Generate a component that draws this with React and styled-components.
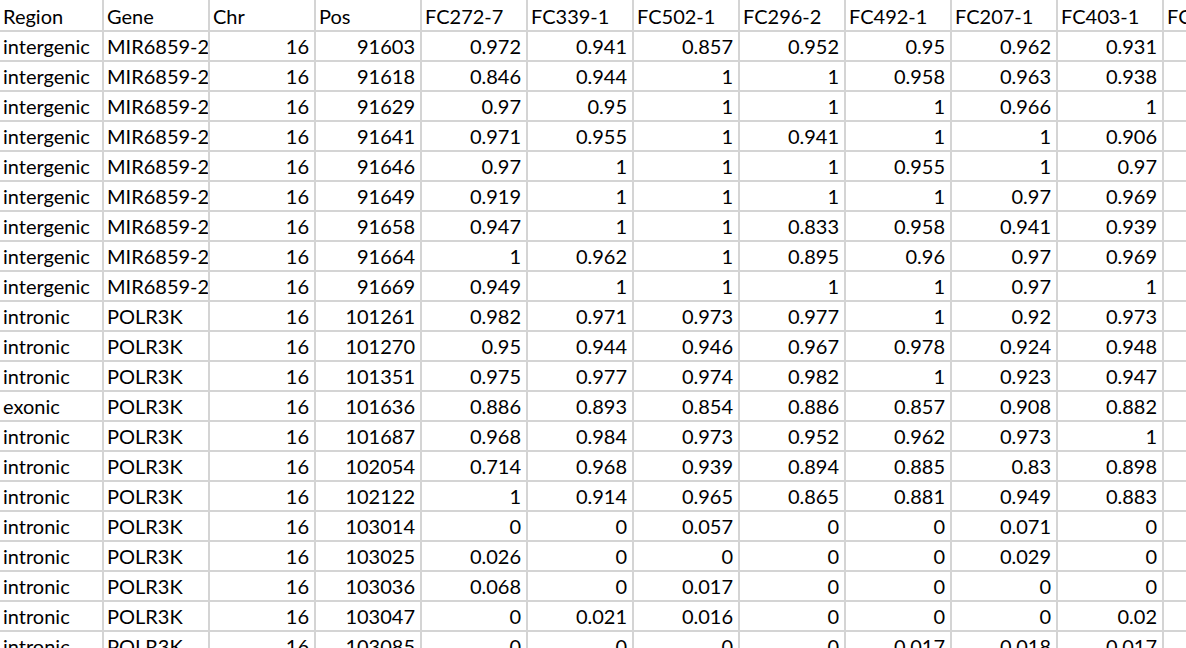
import styled, { createGlobalStyle } from "styled-components";

const GlobalStyle = createGlobalStyle`
	html, body {
		margin: 0;
		padding: 0;
		background: #ffffff;
	}
	body {
		overflow: hidden;
	}
`;

const COLS = [104, 106, 106, 106, 106, 106, 106, 106, 106, 106, 106, 106];

const Sheet = styled.div`
	display: grid;
	grid-template-columns: ${COLS.map((w) => w + "px").join(" ")};
	grid-auto-rows: 30px;
	grid-template-rows: 32px;
	width: 1186px;
	height: 648px;
	overflow: hidden;
	font-family: Lato, "Liberation Sans", sans-serif;
	font-size: 20px;
	color: #000;
`;

const Cell = styled.div`
	box-sizing: border-box;
	border-right: 2px solid #d4d4d4;
	border-bottom: 2px solid #d4d4d4;
	display: flex;
	align-items: flex-end;
	justify-content: ${(p) => (p.$num ? "flex-end" : "flex-start")};
	padding: 0 ${(p) => (p.$num ? "5px" : "0")} 2px ${(p) => (p.$num ? "0" : "3px")};
	line-height: 24px;
	white-space: nowrap;
	overflow: hidden;
`;

const header = ["Region", "Gene", "Chr", "Pos", "FC272-7", "FC339-1", "FC502-1", "FC296-2", "FC492-1", "FC207-1", "FC403-1", "FC"];

const rows = [
	["intergenic", "MIR6859-2", 16, 91603, 0.972, 0.941, 0.857, 0.952, 0.95, 0.962, 0.931],
	["intergenic", "MIR6859-2", 16, 91618, 0.846, 0.944, 1, 1, 0.958, 0.963, 0.938],
	["intergenic", "MIR6859-2", 16, 91629, 0.97, 0.95, 1, 1, 1, 0.966, 1],
	["intergenic", "MIR6859-2", 16, 91641, 0.971, 0.955, 1, 0.941, 1, 1, 0.906],
	["intergenic", "MIR6859-2", 16, 91646, 0.97, 1, 1, 1, 0.955, 1, 0.97],
	["intergenic", "MIR6859-2", 16, 91649, 0.919, 1, 1, 1, 1, 0.97, 0.969],
	["intergenic", "MIR6859-2", 16, 91658, 0.947, 1, 1, 0.833, 0.958, 0.941, 0.939],
	["intergenic", "MIR6859-2", 16, 91664, 1, 0.962, 1, 0.895, 0.96, 0.97, 0.969],
	["intergenic", "MIR6859-2", 16, 91669, 0.949, 1, 1, 1, 1, 0.97, 1],
	["intronic", "POLR3K", 16, 101261, 0.982, 0.971, 0.973, 0.977, 1, 0.92, 0.973],
	["intronic", "POLR3K", 16, 101270, 0.95, 0.944, 0.946, 0.967, 0.978, 0.924, 0.948],
	["intronic", "POLR3K", 16, 101351, 0.975, 0.977, 0.974, 0.982, 1, 0.923, 0.947],
	["exonic", "POLR3K", 16, 101636, 0.886, 0.893, 0.854, 0.886, 0.857, 0.908, 0.882],
	["intronic", "POLR3K", 16, 101687, 0.968, 0.984, 0.973, 0.952, 0.962, 0.973, 1],
	["intronic", "POLR3K", 16, 102054, 0.714, 0.968, 0.939, 0.894, 0.885, 0.83, 0.898],
	["intronic", "POLR3K", 16, 102122, 1, 0.914, 0.965, 0.865, 0.881, 0.949, 0.883],
	["intronic", "POLR3K", 16, 103014, 0, 0, 0.057, 0, 0, 0.071, 0],
	["intronic", "POLR3K", 16, 103025, 0.026, 0, 0, 0, 0, 0.029, 0],
	["intronic", "POLR3K", 16, 103036, 0.068, 0, 0.017, 0, 0, 0, 0],
	["intronic", "POLR3K", 16, 103047, 0, 0.021, 0.016, 0, 0, 0, 0.02],
	["intronic", "POLR3K", 16, 103085, 0, 0, 0, 0, 0.017, 0.018, 0.017],
];

export default function App() {
	return (
		<>
			<GlobalStyle />
			<Sheet>
				{header.map((h, i) => (
					<Cell key={"h" + i}>{h}</Cell>
				))}
				{rows.map((row, r) =>
					[...row, ""].map((v, c) => (
						<Cell key={r + "-" + c} $num={typeof v === "number"}>
							{String(v)}
						</Cell>
					))
				)}
			</Sheet>
		</>
	);
}
